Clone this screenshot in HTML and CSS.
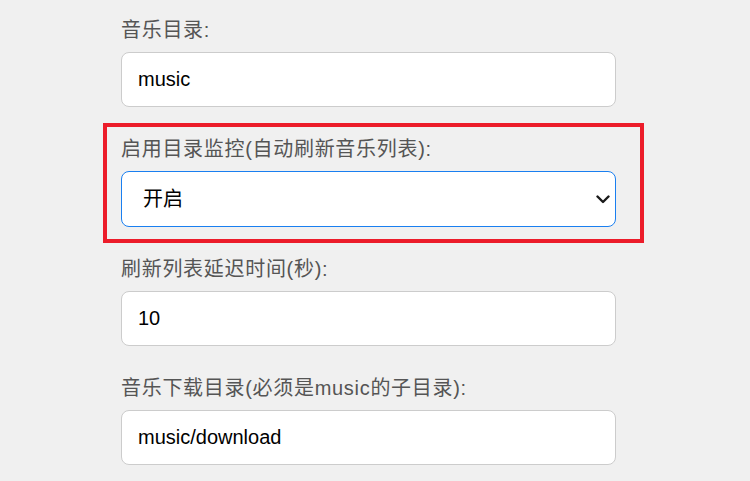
FILE: index.html
```html
<!DOCTYPE html>
<html lang="zh-CN">
<head>
<meta charset="utf-8">
<title>设置</title>
<link rel="stylesheet" href="styles.css">
</head>
<body>
<form class="settings">
  <div class="group">
    <label class="label" for="dir">音乐目录:</label>
    <input class="field" id="dir" type="text" value="music">
  </div>
  <div class="group highlighted">
    <label class="label" for="watch">启用目录监控(自动刷新音乐列表):</label>
    <div class="select-wrap">
      <select class="field select" id="watch">
        <option selected>开启</option>
        <option>关闭</option>
      </select>
      <svg class="chevron" width="14" height="9" viewBox="0 0 14 9" aria-hidden="true">
        <path d="M1.5 1.5 L7 7 L12.5 1.5" fill="none" stroke="#1a1a1a" stroke-width="2.4" stroke-linecap="round" stroke-linejoin="round"/>
      </svg>
    </div>
  </div>
  <div class="group">
    <label class="label" for="delay">刷新列表延迟时间(秒):</label>
    <input class="field" id="delay" type="text" value="10">
  </div>
  <div class="group">
    <label class="label" for="dl">音乐下载目录(必须是music的子目录):</label>
    <input class="field" id="dl" type="text" value="music/download">
  </div>
</form>
</body>
</html>
```

FILE: styles.css
```css
html, body {
  margin: 0;
  padding: 0;
  background: #f0f0f0;
}

body {
  font-family: "Liberation Sans", Arial, "Noto Sans CJK SC", sans-serif;
}

.settings {
  display: flex;
  flex-direction: column;
  gap: 27px;
  width: 495px;
  padding: 15px 0 0 121px;
}

.group {
  display: flex;
  flex-direction: column;
  gap: 7px;
  position: relative;
}

.highlighted::after {
  content: "";
  position: absolute;
  top: -11px;
  left: -18px;
  right: -28px;
  bottom: -16px;
  border: 4px solid #ec1c2a;
  pointer-events: none;
}

.label {
  display: block;
  font-size: 20px;
  line-height: 30px;
  height: 30px;
  letter-spacing: 0.7px;
  color: #555555;
  white-space: nowrap;
}

.field {
  box-sizing: border-box;
  width: 100%;
  height: 55px;
  margin: 0;
  padding: 0 16px;
  font-family: "Liberation Sans", Arial, "Noto Sans CJK SC", sans-serif;
  font-size: 20px;
  color: #000;
  background: #ffffff;
  border: 1px solid #cccccc;
  border-radius: 8px;
  outline: none;
}

.select-wrap {
  position: relative;
}

.select {
  -webkit-appearance: none;
  appearance: none;
  height: 56px;
  padding: 0 40px 0 21px;
  border-color: #1a7ff0;
}

.chevron {
  position: absolute;
  right: 6px;
  top: 24px;
  pointer-events: none;
}
```
